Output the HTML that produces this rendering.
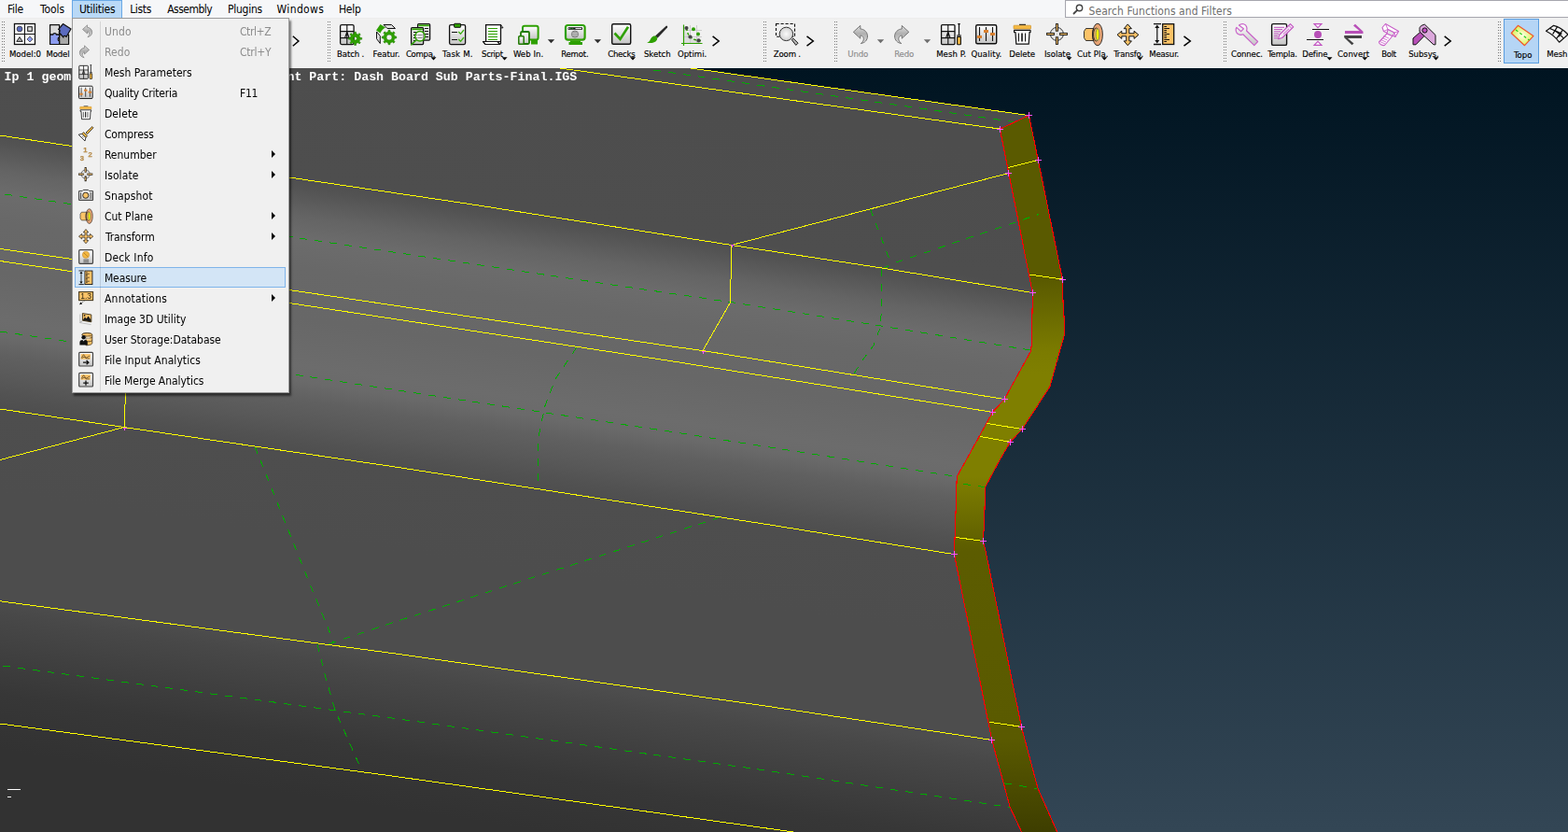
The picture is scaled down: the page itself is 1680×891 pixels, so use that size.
<!DOCTYPE html>
<html lang="en"><head><meta charset="utf-8"><title>ANSA - Utilities menu</title>
<style>
html,body{margin:0;padding:0}
body{width:1680px;height:891px;overflow:hidden;position:relative;background:#f0f0f0;font-family:"DejaVu Sans Condensed","DejaVu Sans","Liberation Sans",sans-serif;font-size:12px;color:#000}
#mb{position:absolute;left:0;top:0;width:1680px;height:19px;background:#f6f7f9;border-bottom:1px solid #ededed}
#mb span{position:absolute;top:1px;line-height:19px;white-space:nowrap}
#mb .msel{position:absolute;left:77px;top:0;width:52px;height:18px;background:#b9d9f7;border:1px solid #6aa9e6;border-bottom:none}
#search{position:absolute;left:1141px;top:0;width:560px;height:17px;background:#fff;border:1px solid #a6a6ae}
#search svg{position:absolute;left:6px;top:2px}
#search span{position:absolute;left:24.5px;top:2px;line-height:19px;color:#6e6e6e;letter-spacing:0.07px}
#tb{position:absolute;left:0;top:20px;width:1680px;height:53px;background:#f0f0f0}
.tl{position:absolute;top:32px;font-size:9.5px;line-height:12px;white-space:nowrap;-webkit-text-stroke:0.15px currentColor}
.tl.dis{color:#8d8d8d}
.topo{position:absolute;left:1611px;top:0;width:36px;height:46px;background:#b5d5f5;border:1px solid #5a9ee0}
#tbi{position:absolute;left:0;top:0}
#vp{position:absolute;left:0;top:73px;display:block;will-change:transform}
#dm{position:absolute;left:77px;top:19px;width:231px;height:400px;background:#f0f0f0;border:1px solid #9a9a9a;box-shadow:2px 2.5px 2px rgba(0,0,0,0.5)}
#dm .vsep{position:absolute;left:29px;top:3px;width:1px;height:396px;background:rgba(0,0,0,0.11);z-index:3}
.mi{position:absolute;left:2px;width:224px;height:20px;border:1px solid transparent;line-height:22px;white-space:nowrap}
.mi.hl{background:#d3e5f6;border-color:#7fb4ea}
.mi b{position:absolute;left:30px;top:0;font-weight:normal}
.mi u{position:absolute;left:176px;top:0;text-decoration:none}
.mi em{position:absolute;left:210px;top:6px;width:0;height:0;border-top:4px solid transparent;border-bottom:4px solid transparent;border-left:4px solid #000}
.mi.dis b,.mi.dis u{color:#8d8d8d}
#dmi{position:absolute;left:0;top:0;z-index:2}

</style></head>
<body>
<div id="mb">
<div class="msel"></div>
<span style="left:7.9px;letter-spacing:-0.22px">File</span>
<span style="left:42.9px;letter-spacing:-0.04px">Tools</span>
<span style="left:84.9px;letter-spacing:-0.24px">Utilities</span>
<span style="left:139.2px;letter-spacing:-0.35px">Lists</span>
<span style="left:179.2px;letter-spacing:-0.50px">Assembly</span>
<span style="left:243.9px;letter-spacing:-0.23px">Plugins</span>
<span style="left:296.6px;letter-spacing:0.35px">Windows</span>
<span style="left:362.9px;letter-spacing:-0.22px">Help</span>
<div id="search"><svg width="14" height="14" viewBox="0 0 14 14"><circle cx="8.5" cy="5.5" r="3.2" fill="none" stroke="#444" stroke-width="1.4"/><path d="M6.2 7.8L2.5 11.5" stroke="#444" stroke-width="1.8" stroke-linecap="round"/></svg><span>Search Functions and Filters</span></div>
</div>
<div id="tb">
<div class="topo"></div>
<svg id="tbi" width="1680" height="53" viewBox="0 20 1680 53">
<defs><linearGradient id="gw" x1="0" y1="0" x2="0" y2="1"><stop offset="0" stop-color="#fff"/><stop offset="1" stop-color="#c4c4c4"/></linearGradient><linearGradient id="gu" x1="0" y1="0" x2="0" y2="1"><stop offset="0" stop-color="#e2e2e2"/><stop offset="0.45" stop-color="#b0b0b0"/><stop offset="1" stop-color="#dedede"/></linearGradient><radialGradient id="gz" cx="0.5" cy="0.5" r="0.5"><stop offset="0" stop-color="#fafafa"/><stop offset="1" stop-color="#d2d2d2"/></radialGradient><radialGradient id="gt" cx="0.5" cy="0.5" r="0.6"><stop offset="0" stop-color="#ffffe8"/><stop offset="1" stop-color="#d4f03c"/></radialGradient></defs>
<g><rect x="15.5" y="25.5" width="22" height="22" fill="#fff" stroke="#111" stroke-width="1.3"/><path d="M26.5 25.5V47.5M15.5 36.5H37.5" stroke="#111" stroke-width="1.1"/><circle cx="21" cy="31" r="2.9" fill="#5b6bbf" stroke="#333" stroke-width="0.8"/><rect x="29.7" y="28.7" width="4.6" height="4.6" fill="#ddd" stroke="#111" stroke-width="1"/><path d="M21 39.6L17.8 44.4H24.2Z" fill="#aaa" stroke="#222" stroke-width="1"/><path d="M32 39L35 42L32 45L29 42Z" fill="#8c9cf0" stroke="#444" stroke-width="0.8"/></g>
<g stroke="#111" stroke-width="1.2" stroke-linejoin="round"><rect x="53.6" y="26.6" width="10" height="10.5" fill="#dadada"/><rect x="63.6" y="37" width="10" height="10.5" fill="#a8a8a8"/><path d="M53.6 47.5V37.2h3.2c0-2 3.6-2 3.6 0h3.2v3c-2 0-2 3.6 0 3.6v3.7Z" fill="#8c9cf0"/><path d="M67.5 25.6L76 31L71 39.5c-1-1.6-4-1.3-3 .6L63.2 34.5c1.6-.6 1.4-2.8-.6-3Z" fill="#5b6bbf"/></g>
<g><rect x="364.6" y="26.6" width="14.5" height="21" rx="1.5" fill="url(#gw)" stroke="#111" stroke-width="1.3"/><path d="M371.8 26.6V47.6M364.6 33.6H379M364.6 40.6H379M369.5 40.6L371.8 34L374 40.6" fill="none" stroke="#111" stroke-width="1.1"/><path d="M385.80 40.27 L387.74 40.40 L387.74 42.20 L385.80 42.33 L385.01 44.24 L386.29 45.71 L385.01 46.99 L383.54 45.71 L381.63 46.50 L381.50 48.44 L379.70 48.44 L379.57 46.50 L377.66 45.71 L376.19 46.99 L374.91 45.71 L376.19 44.24 L375.40 42.33 L373.46 42.20 L373.46 40.40 L375.40 40.27 L376.19 38.36 L374.91 36.89 L376.19 35.61 L377.66 36.89 L379.57 36.10 L379.70 34.16 L381.50 34.16 L381.63 36.10 L383.54 36.89 L385.01 35.61 L386.29 36.89 L385.01 38.36ZM382.40 41.30A1.8 1.8 0 1 0 378.80 41.30A1.8 1.8 0 1 0 382.40 41.30Z" fill="#2ea000" fill-rule="evenodd" stroke="#1f7a00" stroke-width="0.5"/></g>
<g><path d="M403 32.5L407.5 26L413 29.5C410 31 408.5 33 407.5 35.5Z" fill="#2ea000"/><path d="M411 26.5H419.5L423.5 30.5H415Z" fill="#ddd" stroke="#111" stroke-width="1"/><path d="M403.5 34L407.3 38.5V46.5L403.5 41.5Z" fill="#ddd" stroke="#111" stroke-width="1"/><path d="M422.88 38.83 L424.74 39.02 L424.74 40.98 L422.88 41.17 L421.99 43.33 L423.16 44.78 L421.78 46.16 L420.33 44.99 L418.17 45.88 L417.98 47.74 L416.02 47.74 L415.83 45.88 L413.67 44.99 L412.22 46.16 L410.84 44.78 L412.01 43.33 L411.12 41.17 L409.26 40.98 L409.26 39.02 L411.12 38.83 L412.01 36.67 L410.84 35.22 L412.22 33.84 L413.67 35.01 L415.83 34.12 L416.02 32.26 L417.98 32.26 L418.17 34.12 L420.33 35.01 L421.78 33.84 L423.16 35.22 L421.99 36.67ZM420.00 40.00A3 3 0 1 0 414.00 40.00A3 3 0 1 0 420.00 40.00Z" fill="#2ea000" fill-rule="evenodd" stroke="#1f7a00" stroke-width="0.5"/></g>
<g><rect x="447.6" y="25.6" width="13" height="17.5" rx="1" fill="url(#gw)" stroke="#111" stroke-width="1.3"/><rect x="448.3" y="26.4" width="11.6" height="1.8" fill="#2ea000"/><path d="M455 30.5H459M455 33.5H459M455 36.5H459M455 39.5H459" stroke="#111" stroke-width="1"/><rect x="440.6" y="29.6" width="13" height="18" rx="1" fill="url(#gw)" stroke="#111" stroke-width="1.3"/><rect x="441.3" y="30.4" width="11.6" height="1.8" fill="#2ea000"/><path d="M443 34.5H447M443 37.5H447M443 40.5H447M443 43.5H446" stroke="#111" stroke-width="1"/><circle cx="450" cy="38.8" r="5.3" fill="rgba(255,255,255,0.55)" stroke="#2ea000" stroke-width="1.5"/><path d="M446 43L440.6 47.8" stroke="#2ea000" stroke-width="1.6" stroke-linecap="round"/><path d="M447.5 37.5H452.5M447.5 40.5H452.5" stroke="#888" stroke-width="1"/></g>
<g><rect x="481.6" y="26.6" width="17" height="21" rx="1.5" fill="url(#gw)" stroke="#111" stroke-width="1.3"/><rect x="486.6" y="25.3" width="7" height="4" rx="0.6" fill="#2ea000" stroke="#111" stroke-width="1"/><path d="M484 34.5H490M484 42.5H490" stroke="#111" stroke-width="1.2"/><path d="M491.2 34L493.5 36.3L497 32M491.2 42L493.5 44.3L497 40" fill="none" stroke="#3cb010" stroke-width="1.3"/></g>
<g><path d="M520.6 44V26.6H536.5V44" fill="#fff" stroke="#111" stroke-width="1.3"/><path d="M536.5 26.6L539 29.8H536.5Z" fill="#fff" stroke="#111" stroke-width="1"/><path d="M517.5 44.5H533L535.5 47.5H520Z" fill="#fff" stroke="#111" stroke-width="1.2" stroke-linejoin="round"/><path d="M533 44.5H536.5V46.5L535.5 47.5" fill="none" stroke="#111" stroke-width="1.2"/><path d="M523 30.5H533M523 33.5H533M523 36.5H533M523 39.5H533M523 42.5H533" stroke="#2ea000" stroke-width="1.1"/></g>
<g><rect x="560" y="27.8" width="16.6" height="14.6" rx="2" fill="url(#gw)" stroke="#2ea000" stroke-width="2"/><rect x="569" y="43" width="7" height="4.5" fill="#2ea000"/><rect x="558" y="34" width="9" height="13" rx="1.2" fill="url(#gw)" stroke="#1f7a00" stroke-width="1.8"/><rect x="555.8" y="38.8" width="5.4" height="8.4" rx="0.8" fill="url(#gw)" stroke="#1f7a00" stroke-width="1.5"/></g>
<g><rect x="606" y="27" width="20.6" height="15.6" rx="2.5" fill="url(#gw)" stroke="#2ea000" stroke-width="2.2"/><path d="M611 43.5H622V45H624V48H609.5V45H611Z" fill="#2ea000"/><rect x="608.6" y="29.2" width="15.4" height="2.6" rx="0.5" fill="#111"/><path d="M616.5 30.5H623" stroke="#fff" stroke-width="0.9"/><circle cx="609.8" cy="30.5" r="0.6" fill="#fff"/><circle cx="611.8" cy="30.5" r="0.6" fill="#3c3"/><circle cx="613.8" cy="30.5" r="0.6" fill="#3c3"/><circle cx="616" cy="36.6" r="3.6" fill="#ccc" stroke="#777" stroke-width="0.9"/><path d="M612.5 36.6H619.5M613.5 34.6H618.5M613.5 38.6H618.5" stroke="#777" stroke-width="0.7"/></g>
<g><rect x="655.7" y="25.7" width="20" height="21.6" rx="1.5" fill="url(#gw)" stroke="#111" stroke-width="1.4"/><path d="M658.5 35.5L664.5 42L673 28.8" fill="none" stroke="#2ea000" stroke-width="2.6"/></g>
<g><path d="M714 27.6C715 27.8 715.5 28.6 715 29.5L704.5 40.8L702 38.5Z" fill="#2a2a2a"/><path d="M702.3 38.6C699 38 697.5 41 696.5 43C695.5 44.8 694 45.5 693 45.8C697 46.6 702.5 46 704 42.5C704.5 41.3 704 39.6 702.3 38.6Z" fill="#2ea000"/></g>
<g><path d="M733 27H751V46H733Z" fill="none"/><path d="M733 46L733 30C735 38 741 43 751 44.5V46Z" fill="#dcdcdc"/><path d="M739.5 27V46M746.5 27V46M733 32.5H752M733 39.5H752" stroke="#c8c8c8" stroke-width="0.9"/><path d="M732.5 26.5V49M730 46.5H752.5" stroke="#2ea000" stroke-width="1.2"/><path d="M735.5 30C736.5 36 738.5 39 740 40C743 42.5 746 43 752 43.6" fill="none" stroke="#2ea000" stroke-width="1.5" stroke-dasharray="3 2"/><circle cx="743" cy="31.3" r="2" fill="#2ea000"/><circle cx="748" cy="36.5" r="2" fill="#2ea000"/><circle cx="735.5" cy="30" r="2.1" fill="#444"/><circle cx="739.5" cy="39.5" r="2.1" fill="#444"/><circle cx="748.5" cy="43.4" r="2.1" fill="#444"/></g>
<g><rect x="831.5" y="25.5" width="20" height="13.8" fill="none" stroke="#111" stroke-width="1.1" stroke-dasharray="3.2 1.8"/><circle cx="842.4" cy="36.4" r="7.2" fill="url(#gz)" stroke="#333" stroke-width="1"/><path d="M848.3 42.6L850 41.2L855 46.2L852.8 48.4Z" fill="#bbb" stroke="#111" stroke-width="1"/></g>
<path d="M914.3 34.3L921.8 27.4V31C926 31.2 929.6 34.5 929.5 39C929.4 43 926.5 46 922.3 46.6C925.3 44.5 926 41.5 924.7 39.6C923.8 38.3 922.8 38 921.8 38V41.2Z" fill="url(#gu)" stroke="#6a6a6a" stroke-width="0.9" stroke-linejoin="round"/>
<g transform="translate(1888.1 0) scale(-1 1)"><path d="M914.3 34.3L921.8 27.4V31C926 31.2 929.6 34.5 929.5 39C929.4 43 926.5 46 922.3 46.6C925.3 44.5 926 41.5 924.7 39.6C923.8 38.3 922.8 38 921.8 38V41.2Z" fill="url(#gu)" stroke="#6a6a6a" stroke-width="0.9" stroke-linejoin="round"/></g>
<g><rect x="1008.6" y="26.6" width="14.4" height="21" rx="1" fill="url(#gw)" stroke="#111" stroke-width="1.3"/><path d="M1015.8 26.6V47.6M1008.6 33.6H1023M1008.6 40.6H1023M1013.6 40.6L1015.8 34L1018 40.6" fill="none" stroke="#111" stroke-width="1.1"/><path d="M1027.5 25.5V38" stroke="#111" stroke-width="1.2"/><path d="M1026.3 25.6H1028.7M1025 38H1030" stroke="#111" stroke-width="1.2"/><rect x="1025.6" y="39.4" width="3.8" height="8.4" rx="0.8" fill="#f5b942" stroke="#111" stroke-width="1.1"/></g>
<g><rect x="1045.7" y="26.7" width="22" height="20" rx="1.5" fill="url(#gw)" stroke="#111" stroke-width="1.4"/><path d="M1049.5 29V44M1056.5 29V44M1063.5 29V44" stroke="#111" stroke-width="1.1"/><rect x="1047" y="38" width="5" height="3" fill="#d88030"/><rect x="1054" y="32" width="5" height="3" fill="#d88030"/><rect x="1061" y="35" width="5" height="3" fill="#d88030"/></g>
<g><path d="M1092 26.4H1099" stroke="#222" stroke-width="1.2"/><rect x="1086" y="27.2" width="18.5" height="3.8" rx="0.6" fill="#f5b942" stroke="#c98a20" stroke-width="0.6"/><path d="M1086.6 32.4H1104V34.6H1103L1102.2 47.2H1088.8L1088 34.6H1086.6Z" fill="#fff" stroke="#111" stroke-width="1.2" stroke-linejoin="round"/><path d="M1091.5 35.5V44.5M1098.5 35.5V44.5" stroke="#111" stroke-width="1"/><path d="M1095 35.5V44.5" stroke="#111" stroke-width="1.6"/></g>
<g><circle cx="1132.4" cy="36.4" r="7" fill="#e4e4e4" stroke="#222" stroke-width="0.9"/><g fill="#fbc368" stroke="#111" stroke-width="0.9"><rect x="1121.6" y="35.4" width="7.8" height="2.1"/><rect x="1135.6" y="35.4" width="7.8" height="2.1"/><rect x="1131.4" y="25.6" width="2.1" height="7.6"/><rect x="1131.4" y="39.8" width="2.1" height="7.6"/></g></g>
<g stroke="#222" stroke-width="0.9"><path d="M1163.5 30.5H1172V43.5H1163.5L1161.5 40.5V33.5Z" fill="#fbc368"/><ellipse cx="1176" cy="37" rx="5.4" ry="11.8" fill="#e8a474"/><path d="M1172 30.5C1170 33 1170 41 1172 43.5" fill="none"/><ellipse cx="1174.6" cy="37" rx="3" ry="7" fill="#f4b860"/><ellipse cx="1176" cy="37" rx="1.9" ry="6.4" fill="#f2f200" stroke="#886"/></g>
<path d="M1208.3 25.9L1212.3999999999999 30.7H1209.8V35.8H1215.1000000000001V33.199999999999996L1219.9 37.3L1215.1000000000001 41.4V38.8H1209.8V43.900000000000006H1212.3999999999999L1208.3 48.7L1204.2 43.900000000000006H1206.8V38.8H1201.8V41.4L1197.0 37.3L1201.8 33.199999999999996V35.8H1206.8V30.7H1204.2Z" fill="#fbc368" stroke="#111" stroke-width="1" stroke-linejoin="miter"/>
<g><path d="M1236 25.6H1244M1236 47.5H1244" stroke="#111" stroke-width="1.3"/><path d="M1239.8 28V45" stroke="#111" stroke-width="1.2"/><path d="M1239.8 26.6L1242.3 30H1237.3ZM1239.8 46.5L1242.3 43H1237.3Z" fill="#111"/><rect x="1245.7" y="25.7" width="12" height="21.8" fill="#fbc368" stroke="#111" stroke-width="1.3"/><path d="M1247.3 28.5H1250M1247.3 30.5H1253M1247.3 32.5H1250M1247.3 34.5H1250M1247.3 36.5H1253M1247.3 38.5H1250M1247.3 40.5H1250M1247.3 42.5H1253M1247.3 44.5H1250" stroke="#111" stroke-width="1"/></g>
<path d="M1327.5 27C1330.5 24.6 1334.8 25.4 1335.8 29.2C1336.2 30.8 1336 32 1335.6 33L1347.6 44.5L1343.8 48.6L1331.8 36.8C1328.6 38.2 1324.8 36.6 1324.2 33C1324 31.6 1324.3 30.3 1324.9 29.4L1329.6 33.6L1332.4 30.8Z" fill="url(#gw)" stroke="#c860c8" stroke-width="1.2" stroke-linejoin="round"/>
<g><rect x="1362.6" y="25.6" width="16" height="22.8" rx="1.5" fill="url(#gw)" stroke="#111" stroke-width="1.4"/><path d="M1365 29.3H1376M1365 31.6H1374M1365 33.9H1372M1365 36.2H1370M1365 38.5H1369M1365 40.8H1369" stroke="#c050c0" stroke-width="1"/><path d="M1382.5 25.6L1385.8 28.8L1373.8 40.5L1369.6 41.8L1370.6 37.5Z" fill="#f4e4f4" stroke="#c050c0" stroke-width="1.1" stroke-linejoin="round"/><path d="M1380.8 27.3L1384 30.5M1375 36.5L1381 30.8" stroke="#c050c0" stroke-width="0.9"/></g>
<g><circle cx="1412" cy="37" r="4" fill="#b84fb8"/><path d="M1406 31.5H1424M1400 42.5H1418" stroke="#111" stroke-width="1.2"/><path d="M1408 25.6H1416L1412 29.6ZM1408 48.4H1416L1412 44.4Z" fill="#fff" stroke="#c050c0" stroke-width="1.1"/></g>
<g><path d="M1441 33H1456.5L1450 27.5L1452 25.8L1460.5 33.8V36H1441Z" fill="#b84fb8"/><path d="M1459 41H1444L1450.5 46.5L1448.5 48.2L1440.2 40.2V38H1459Z" fill="#444"/></g>
<g fill="#fff" stroke="#c860c8" stroke-width="1.1" stroke-linejoin="round"><path d="M1486 36L1492 38.5L1483.5 48.5C1481 49 1477.5 47 1477.5 45Z"/><path d="M1479.5 42.5L1485 45M1481 40.5L1486.5 43M1482.5 38.5L1488 41M1478.5 44.5L1484 47" fill="none" stroke-width="0.8"/><path d="M1484.5 25.5L1498.5 33.5L1495 39.5L1482.5 33.5L1481 29.5Z"/><path d="M1484.5 25.5L1487 31.5L1482.5 33.5M1487 31.5L1494 35L1495 39.5M1494 35L1498.5 33.5" fill="none" stroke-width="0.9"/><path d="M1487 31.5L1494 35L1492 38.5L1486 36Z" fill="#e4e4e4"/></g>
<g stroke="#111" stroke-width="1" stroke-linejoin="round"><path d="M1514 41L1521.5 34.5L1526 38.5L1517 47.8H1514Z" fill="#b84fb8"/><path d="M1521 31.5C1520.5 29 1522.5 27 1526.5 26.2L1538 37.5V47.8H1536L1521 34Z" fill="#dca8dc"/><circle cx="1526.5" cy="32.5" r="2.6" fill="#c050c0"/></g>
<g><path d="M1626.4 27.3L1642.9 38.6L1633.5 48.7L1619.3 35.5Z" fill="url(#gt)" stroke="#f0562c" stroke-width="1.2" stroke-linejoin="round"/><path d="M1624 32L1638.5 43" stroke="#20d020" stroke-width="1.2" stroke-dasharray="3 2.5"/></g>
<g fill="none" stroke="#111" stroke-width="1.2" stroke-linejoin="round"><path d="M1656.5 33.2L1664.6 27.3C1670 28.6 1675.5 32 1680 37L1670.6 45.2C1667 40 1662 36 1656.5 33.2Z" fill="#f4f4f4"/><path d="M1660.4 30.4C1666 32.4 1671.2 36 1675.2 41M1668.6 28.6L1663.6 36.6M1674.4 32.2L1667.6 41.4M1666.2 32.8L1673 36L1670.2 39.2"/></g>
<path d="M2.5 23V66M4.5 23V66" stroke="#787878" stroke-width="1" stroke-dasharray="1 2" shape-rendering="crispEdges"/>
<path d="M351.5 23V66M353.5 23V66" stroke="#787878" stroke-width="1" stroke-dasharray="1 2" shape-rendering="crispEdges"/>
<path d="M818.5 23V66M820.5 23V66" stroke="#787878" stroke-width="1" stroke-dasharray="1 2" shape-rendering="crispEdges"/>
<path d="M894.5 23V66M896.5 23V66" stroke="#787878" stroke-width="1" stroke-dasharray="1 2" shape-rendering="crispEdges"/>
<path d="M1311.5 23V66M1313.5 23V66" stroke="#787878" stroke-width="1" stroke-dasharray="1 2" shape-rendering="crispEdges"/>
<path d="M1605.5 23V66M1607.5 23V66" stroke="#787878" stroke-width="1" stroke-dasharray="1 2" shape-rendering="crispEdges"/>
<path d="M313.8 38.8L319.9 44L313.8 49.2" fill="none" stroke="#000" stroke-width="1.5"/>
<path d="M763.6 38.8L770.2 44L763.6 49.2" fill="none" stroke="#000" stroke-width="1.5"/>
<path d="M864.5 38.8L871.3 44L864.5 49.2" fill="none" stroke="#000" stroke-width="1.5"/>
<path d="M1268.5 38.8L1275.3 44L1268.5 49.2" fill="none" stroke="#000" stroke-width="1.5"/>
<path d="M1547.7 38.8L1554.2 44L1547.7 49.2" fill="none" stroke="#000" stroke-width="1.5"/>
<path d="M586.8 42.2H594.2L590.5 46.2Z" fill="#2e2e2e"/>
<path d="M636.7 42.2H644.1L640.4 46.2Z" fill="#2e2e2e"/>
<path d="M939.8 42.2H947.2L943.5 46.2Z" fill="#6e6e6e"/>
<path d="M989.8 42.2H997.2L993.5 46.2Z" fill="#6e6e6e"/>
<path d="M461.5 61.2H467.5L464.5 64.4Z" fill="#000"/>
<path d="M537.6 61.2H543.6L540.6 64.4Z" fill="#000"/>
<path d="M675.0 61.2H681.0L678.0 64.4Z" fill="#000"/>
<path d="M1142.5 61.2H1148.5L1145.5 64.4Z" fill="#000"/>
<path d="M1180.3 61.2H1186.3L1183.3 64.4Z" fill="#000"/>
<path d="M1218.4 61.2H1224.4L1221.4 64.4Z" fill="#000"/>
<path d="M1421.5 61.2H1427.5L1424.5 64.4Z" fill="#000"/>
<path d="M1459.3 61.2H1465.3L1462.3 64.4Z" fill="#000"/>
<path d="M1535.5 61.2H1541.5L1538.5 64.4Z" fill="#000"/>
</svg>
<div class="tl" style="left:9.9px;letter-spacing:0.02px">Model:0</div>
<div class="tl" style="left:49.4px;letter-spacing:-0.10px">Model</div>
<div class="tl" style="left:361.1px;letter-spacing:-0.13px">Batch .</div>
<div class="tl" style="left:399.6px;letter-spacing:-0.03px">Featur.</div>
<div class="tl" style="left:434.9px;letter-spacing:-0.28px">Compa.</div>
<div class="tl" style="left:474.1px;letter-spacing:0.23px">Task M.</div>
<div class="tl" style="left:516.1px;letter-spacing:-0.38px">Script</div>
<div class="tl" style="left:549.9px;letter-spacing:0.07px">Web In.</div>
<div class="tl" style="left:601.2px;letter-spacing:-0.18px">Remot.</div>
<div class="tl" style="left:651.2px;letter-spacing:-0.24px">Checks</div>
<div class="tl" style="left:689.9px;letter-spacing:0.02px">Sketch</div>
<div class="tl" style="left:725.9px;letter-spacing:0.02px">Optimi.</div>
<div class="tl" style="left:828.8px;letter-spacing:-0.16px">Zoom .</div>
<div class="tl dis" style="left:908.2px;letter-spacing:-0.07px">Undo</div>
<div class="tl dis" style="left:958.2px;letter-spacing:-0.10px">Redo</div>
<div class="tl" style="left:1003.2px;letter-spacing:0.05px">Mesh P.</div>
<div class="tl" style="left:1040.4px;letter-spacing:0.13px">Quality.</div>
<div class="tl" style="left:1081.2px;letter-spacing:-0.03px">Delete</div>
<div class="tl" style="left:1118.9px;letter-spacing:-0.07px">Isolate</div>
<div class="tl" style="left:1154.1px;letter-spacing:0.06px">Cut Pla.</div>
<div class="tl" style="left:1193.2px;letter-spacing:-0.17px">Transfo.</div>
<div class="tl" style="left:1231.2px;letter-spacing:-0.16px">Measur.</div>
<div class="tl" style="left:1319.1px;letter-spacing:-0.13px">Connec.</div>
<div class="tl" style="left:1358.2px;letter-spacing:-0.20px">Templa.</div>
<div class="tl" style="left:1395.3px;letter-spacing:-0.16px">Define</div>
<div class="tl" style="left:1433.1px;letter-spacing:0.05px">Convert</div>
<div class="tl" style="left:1480.3px;letter-spacing:-0.37px">Bolt</div>
<div class="tl" style="left:1509.2px;letter-spacing:-0.07px">Subsys.</div>
<div class="tl" style="left:1621.9px;letter-spacing:0.00px;top:33px">Topo</div>
<div class="tl" style="left:1657.3px;letter-spacing:-0.10px">Mesh</div>
</div>
<svg id="vp" width="1680" height="818" viewBox="0 73 1680 818">
<defs>
<linearGradient id="bg" gradientUnits="userSpaceOnUse" x1="0" y1="73" x2="0" y2="891"><stop offset="0" stop-color="#001421"/><stop offset="1" stop-color="#334655"/></linearGradient>
<linearGradient id="sf" gradientUnits="userSpaceOnUse" x1="0" y1="0" x2="-146.70" y2="978.00"><stop offset="0.0000" stop-color="#4d4d4d"/><stop offset="0.1400" stop-color="#4e4e4e"/><stop offset="0.1530" stop-color="#535353"/><stop offset="0.1830" stop-color="#646464"/><stop offset="0.2070" stop-color="#6c6c6c"/><stop offset="0.2380" stop-color="#686868"/><stop offset="0.2930" stop-color="#676767"/><stop offset="0.3230" stop-color="#6a6a6a"/><stop offset="0.3430" stop-color="#6c6c6c"/><stop offset="0.3600" stop-color="#6a6a6a"/><stop offset="0.3800" stop-color="#606060"/><stop offset="0.4030" stop-color="#595959"/><stop offset="0.4230" stop-color="#525252"/><stop offset="0.4380" stop-color="#4e4e4e"/><stop offset="0.5280" stop-color="#4d4d4d"/><stop offset="0.6400" stop-color="#4d4d4d"/><stop offset="0.6580" stop-color="#484848"/><stop offset="0.6980" stop-color="#404040"/><stop offset="0.7430" stop-color="#373737"/><stop offset="0.8030" stop-color="#323232"/><stop offset="1.0000" stop-color="#323232"/></linearGradient>
<linearGradient id="bd" gradientUnits="userSpaceOnUse" x1="0" y1="0" x2="0" y2="891"><stop offset="0.1392" stop-color="#5a5a00"/><stop offset="0.3367" stop-color="#5a5a00"/><stop offset="0.4220" stop-color="#7b7b00"/><stop offset="0.4489" stop-color="#7f7f00"/><stop offset="0.5724" stop-color="#7f7f00"/><stop offset="0.6622" stop-color="#5c5c00"/><stop offset="0.8866" stop-color="#5a5a00"/><stop offset="1.0000" stop-color="#3e3e00"/></linearGradient>
</defs>
<rect x="0" y="73" width="1680" height="818" fill="url(#bg)"/>
<polygon points="0.0,73.0 740.0,73.0 1102.4,123.6 1071.4,138.1 1106.3,313.5 1105.5,368.6 1104.3,376.3 1076.2,427.5 1063.5,441.4 1036.7,490.0 1025.2,510.5 1023.8,555.5 1022.4,593.6 1062.7,792.4 1082.1,864.2 1094.6,891.0 0.0,891.0" fill="url(#sf)"/>
<polygon points="1102.4,123.6 1112.3,171.4 1138.3,299.0 1139.0,323.0 1140.5,347.0 1140.5,358.5 1131.5,390.0 1125.0,413.8 1095.2,459.6 1082.4,473.3 1072.6,490.0 1055.7,521.5 1054.5,561.4 1053.3,579.5 1056.0,590.0 1094.4,778.3 1111.9,844.0 1132.7,891.0 1094.6,891.0 1082.1,864.2 1062.7,792.4 1022.4,593.6 1023.8,555.5 1025.2,510.5 1036.7,490.0 1063.5,441.4 1076.2,427.5 1104.3,376.3 1105.5,368.6 1106.3,313.5 1071.4,138.1" fill="url(#bd)"/>
<g fill="none" stroke="#00aa00" stroke-width="1" stroke-dasharray="8 8" shape-rendering="crispEdges">
<polyline points="700.0,75.0 1090.0,131.0"/>
<polyline points="5.0,208.0 700.0,311.5 782.5,323.5 943.8,349.0 1104.0,375.0"/>
<polyline points="0.0,355.0 314.0,401.0 720.0,462.5 1025.2,510.5"/>
<polyline points="3.0,713.0 420.0,769.0 820.0,825.0 1082.0,864.5"/>
<polyline points="932.5,223.8 953.8,280.0"/>
<polyline points="945.0,288.0 960.0,281.0 1113.0,229.5"/>
<polyline points="945.0,288.0 943.8,348.8 936.0,370.0 924.0,386.0 915.0,400.0"/>
<polyline points="617.5,372.5 595.0,406.0 583.8,435.0 576.0,472.5 577.0,521.0"/>
<polyline points="273.0,478.0 331.0,623.0 352.5,675.0 357.5,689.0"/>
<polyline points="340.0,690.0 348.8,725.0 358.8,760.0 387.5,825.0"/>
<polyline points="352.5,689.5 420.0,667.0 770.0,554.5"/>
<polyline points="1131.5,383.5 1134.5,386.5"/>
<polyline points="1032.0,518.3 1055.0,521.5"/>
<polyline points="1076.0,838.8 1111.5,844.5"/>
</g>
<g fill="none" stroke="#ffff00" stroke-width="1" shape-rendering="crispEdges">
<polyline points="740.0,73.0 1102.4,123.6"/>
<polyline points="600.0,73.0 1071.4,138.1"/>
<polyline points="0.0,145.0 77.0,156.5 310.0,190.0 500.0,218.0 783.8,262.5 945.0,287.0 1106.3,313.5"/>
<polyline points="783.8,262.5 932.5,223.8 1080.7,185.5"/>
<polyline points="783.8,262.5 782.5,323.8 753.0,375.5"/>
<polyline points="0.0,266.5 310.0,310.5 720.0,371.0 753.0,375.5 1076.2,427.5"/>
<polyline points="0.0,279.5 310.0,324.5 720.0,386.8 1063.5,441.4"/>
<polyline points="0.0,438.0 133.0,457.5 420.0,499.5 819.5,561.2 1022.4,593.6"/>
<polyline points="0.0,492.5 133.0,457.5"/>
<polyline points="134.5,421.0 133.0,457.5"/>
<polyline points="0.0,643.8 420.0,699.5 820.0,756.0 1062.7,792.4"/>
<polyline points="0.0,775.0 420.0,831.0 820.0,886.8 850.0,891.0"/>
<polyline points="1080.0,179.5 1112.3,171.4"/>
<polyline points="1103.3,294.0 1138.3,299.0"/>
<polyline points="1057.0,453.3 1095.2,459.6"/>
<polyline points="1050.0,467.4 1082.4,473.3"/>
<polyline points="1024.0,575.4 1053.3,579.5"/>
<polyline points="1059.9,773.3 1094.4,778.3"/>
</g>
<g fill="none" stroke="#ff0000" stroke-width="1.1" shape-rendering="crispEdges">
<polyline points="1071.4,138.1 1106.3,313.5 1105.5,368.6 1104.3,376.3 1076.2,427.5 1063.5,441.4 1036.7,490.0 1025.2,510.5 1023.8,555.5 1022.4,593.6 1062.7,792.4 1082.1,864.2 1094.6,891.0"/>
<polyline points="1102.4,123.6 1112.3,171.4 1138.3,299.0 1139.0,323.0 1140.5,347.0 1140.5,358.5 1131.5,390.0 1125.0,413.8 1095.2,459.6 1082.4,473.3 1072.6,490.0 1055.7,521.5 1054.5,561.4 1053.3,579.5 1056.0,590.0 1094.4,778.3 1111.9,844.0 1132.7,891.0"/>
<polyline points="1071.4,138.1 1102.4,123.6"/>
</g>
<g stroke="#ff50ff" stroke-width="1" shape-rendering="crispEdges">
<path d="M1099.0 123.5H1106.0M1102.5 120.0V127.0"/>
<path d="M1068.0 138.5H1075.0M1071.5 135.0V142.0"/>
<path d="M1109.0 171.5H1116.0M1112.5 168.0V175.0"/>
<path d="M1077.0 185.5H1084.0M1080.5 182.0V189.0"/>
<path d="M1135.0 299.5H1142.0M1138.5 296.0V303.0"/>
<path d="M1103.0 313.5H1110.0M1106.5 310.0V317.0"/>
<path d="M1073.0 427.5H1080.0M1076.5 424.0V431.0"/>
<path d="M1060.0 441.5H1067.0M1063.5 438.0V445.0"/>
<path d="M1092.0 459.5H1099.0M1095.5 456.0V463.0"/>
<path d="M1079.0 473.5H1086.0M1082.5 470.0V477.0"/>
<path d="M1050.0 579.5H1057.0M1053.5 576.0V583.0"/>
<path d="M1019.0 593.5H1026.0M1022.5 590.0V597.0"/>
<path d="M1091.0 778.5H1098.0M1094.5 775.0V782.0"/>
<path d="M1059.0 792.5H1066.0M1062.5 789.0V796.0"/>
<path d="M782.5 262.5H786.5M784.5 261.5V264.5"/>
<path d="M751.5 376.5H755.5M753.5 375.5V378.5"/>
<path d="M131.5 458.5H135.5M133.5 457.5V460.5"/>
</g>
<path d="M8 845.5H22M8 853.5H12" stroke="#fff" stroke-width="1" shape-rendering="crispEdges"/>
<text x="4.6" y="86" fill="#fff" font-family="'Liberation Mono',monospace" font-weight="bold" font-size="13.29px" xml:space="preserve" style="white-space:pre">Ip 1 geometry                    Current Part: Dash Board Sub Parts-Final.IGS</text>
</svg>
<div id="dm">
<div class="vsep"></div>
<svg id="dmi" width="30" height="400" viewBox="78 20 30 400"><g transform="translate(84.00 24.60) scale(0.6667) translate(-907.50 -24)"><path d="M914.3 34.3L921.8 27.4V31C926 31.2 929.6 34.5 929.5 39C929.4 43 926.5 46 922.3 46.6C925.3 44.5 926 41.5 924.7 39.6C923.8 38.3 922.8 38 921.8 38V41.2Z" fill="url(#gu)" stroke="#6a6a6a" stroke-width="0.9" stroke-linejoin="round"/></g>
<g transform="translate(84.00 46.60) scale(0.6667) translate(-956.50 -24)"><g transform="translate(1888.1 0) scale(-1 1)"><path d="M914.3 34.3L921.8 27.4V31C926 31.2 929.6 34.5 929.5 39C929.4 43 926.5 46 922.3 46.6C925.3 44.5 926 41.5 924.7 39.6C923.8 38.3 922.8 38 921.8 38V41.2Z" fill="url(#gu)" stroke="#6a6a6a" stroke-width="0.9" stroke-linejoin="round"/></g></g>
<g transform="translate(83.70 68.60) scale(0.6667) translate(-1007.00 -24)"><g><rect x="1008.6" y="26.6" width="14.4" height="21" rx="1" fill="url(#gw)" stroke="#111" stroke-width="1.3"/><path d="M1015.8 26.6V47.6M1008.6 33.6H1023M1008.6 40.6H1023M1013.6 40.6L1015.8 34L1018 40.6" fill="none" stroke="#111" stroke-width="1.1"/><path d="M1027.5 25.5V38" stroke="#111" stroke-width="1.2"/><path d="M1026.3 25.6H1028.7M1025 38H1030" stroke="#111" stroke-width="1.2"/><rect x="1025.6" y="39.4" width="3.8" height="8.4" rx="0.8" fill="#f5b942" stroke="#111" stroke-width="1.1"/></g></g>
<g transform="translate(83.70 90.40) scale(0.6667) translate(-1044.50 -24)"><g><rect x="1045.7" y="26.7" width="22" height="20" rx="1.5" fill="url(#gw)" stroke="#111" stroke-width="1.4"/><path d="M1049.5 29V44M1056.5 29V44M1063.5 29V44" stroke="#111" stroke-width="1.1"/><rect x="1047" y="38" width="5" height="3" fill="#d88030"/><rect x="1054" y="32" width="5" height="3" fill="#d88030"/><rect x="1061" y="35" width="5" height="3" fill="#d88030"/></g></g>
<g transform="translate(84.00 112.20) scale(0.6667) translate(-1083.50 -24)"><g><path d="M1092 26.4H1099" stroke="#222" stroke-width="1.2"/><rect x="1086" y="27.2" width="18.5" height="3.8" rx="0.6" fill="#f5b942" stroke="#c98a20" stroke-width="0.6"/><path d="M1086.6 32.4H1104V34.6H1103L1102.2 47.2H1088.8L1088 34.6H1086.6Z" fill="#fff" stroke="#111" stroke-width="1.2" stroke-linejoin="round"/><path d="M1091.5 35.5V44.5M1098.5 35.5V44.5" stroke="#111" stroke-width="1"/><path d="M1095 35.5V44.5" stroke="#111" stroke-width="1.6"/></g></g>
<g transform="translate(84 135)"><path d="M14.8 0.6L16 1.8L9.6 8.6L8 7Z" fill="#f5b942" stroke="#222" stroke-width="0.8"/><path d="M5.6 6.6L9.6 10.6L7.8 12.4L3.8 8.4Z" fill="#f5b942" stroke="#222" stroke-width="0.8"/><path d="M3.8 8.4L7.8 12.4L7 16L0.2 9.2Z" fill="#fff" stroke="#222" stroke-width="0.9" stroke-linejoin="round"/><path d="M3.6 10.6L5.6 12.6" stroke="#555" stroke-width="0.7"/></g>
<g transform="translate(84 157)" font-family="'Liberation Sans',sans-serif" font-weight="bold" font-size="7.6px" fill="#c89850" stroke="#9a7840" stroke-width="0.25"><text x="5.2" y="6.4">1</text><text x="10.6" y="11.2">2</text><text x="1.8" y="15.2">3</text></g>
<g transform="translate(83.70 178.30) scale(0.6667) translate(-1120.50 -24)"><g><circle cx="1132.4" cy="36.4" r="7" fill="#e4e4e4" stroke="#222" stroke-width="0.9"/><g fill="#fbc368" stroke="#111" stroke-width="0.9"><rect x="1121.6" y="35.4" width="7.8" height="2.1"/><rect x="1135.6" y="35.4" width="7.8" height="2.1"/><rect x="1131.4" y="25.6" width="2.1" height="7.6"/><rect x="1131.4" y="39.8" width="2.1" height="7.6"/></g></g></g>
<g transform="translate(84 201)"><path d="M0.6 3.6H4.2L5.2 2.4H10.6L11.6 3.6H15.6V13.4H0.6Z" fill="url(#gw)" stroke="#3a3a3a" stroke-width="1" stroke-linejoin="round"/><rect x="12" y="5" width="2.8" height="7" fill="#999"/><path d="M2.6 5.2V12" stroke="#333" stroke-width="0.9"/><circle cx="7.8" cy="8.2" r="3.1" fill="#fbc368" stroke="#222" stroke-width="0.9"/></g>
<g transform="translate(84.00 222.90) scale(0.6667) translate(-1158.50 -24)"><g stroke="#222" stroke-width="0.9"><path d="M1163.5 30.5H1172V43.5H1163.5L1161.5 40.5V33.5Z" fill="#fbc368"/><ellipse cx="1176" cy="37" rx="5.4" ry="11.8" fill="#e8a474"/><path d="M1172 30.5C1170 33 1170 41 1172 43.5" fill="none"/><ellipse cx="1174.6" cy="37" rx="3" ry="7" fill="#f4b860"/><ellipse cx="1176" cy="37" rx="1.9" ry="6.4" fill="#f2f200" stroke="#886"/></g></g>
<g transform="translate(84.00 244.30) scale(0.6667) translate(-1196.30 -24)"><path d="M1208.3 25.9L1212.3999999999999 30.7H1209.8V35.8H1215.1000000000001V33.199999999999996L1219.9 37.3L1215.1000000000001 41.4V38.8H1209.8V43.900000000000006H1212.3999999999999L1208.3 48.7L1204.2 43.900000000000006H1206.8V38.8H1201.8V41.4L1197.0 37.3L1201.8 33.199999999999996V35.8H1206.8V30.7H1204.2Z" fill="#fbc368" stroke="#111" stroke-width="1" stroke-linejoin="miter"/></g>
<g transform="translate(84 267)"><rect x="0.7" y="0.7" width="14.8" height="14.6" rx="1" fill="url(#gw)" stroke="#444" stroke-width="1.2"/><rect x="5.4" y="10.4" width="5.8" height="4.6" fill="#8c8c8c"/><circle cx="8" cy="5.8" r="3.6" fill="#f5b942" stroke="#c8923a" stroke-width="0.7"/><path d="M5.6 3.6L10.4 8" stroke="#b07a28" stroke-width="0.9"/></g>
<g transform="translate(83.80 288.90) scale(0.6667) translate(-1235.00 -24)"><g><path d="M1236 25.6H1244M1236 47.5H1244" stroke="#111" stroke-width="1.3"/><path d="M1239.8 28V45" stroke="#111" stroke-width="1.2"/><path d="M1239.8 26.6L1242.3 30H1237.3ZM1239.8 46.5L1242.3 43H1237.3Z" fill="#111"/><rect x="1245.7" y="25.7" width="12" height="21.8" fill="#fbc368" stroke="#111" stroke-width="1.3"/><path d="M1247.3 28.5H1250M1247.3 30.5H1253M1247.3 32.5H1250M1247.3 34.5H1250M1247.3 36.5H1253M1247.3 38.5H1250M1247.3 40.5H1250M1247.3 42.5H1253M1247.3 44.5H1250" stroke="#111" stroke-width="1"/></g></g>
<g transform="translate(84 311)"><rect x="0.6" y="1.6" width="15" height="9" fill="#fbc368" stroke="#4a3c20" stroke-width="1.1"/><text x="8.1" y="9.3" text-anchor="middle" font-family="'Liberation Sans',sans-serif" font-size="8.5px" fill="#2a2210">1.3</text><path d="M6.6 11.2L3 13.6" stroke="#444" stroke-width="0.7" stroke-dasharray="1.2 0.8"/><path d="M1 15.2L2.6 12.4L4.2 14.6Z" fill="#000"/></g>
<g transform="translate(84 333)"><path d="M1.8 3.5V12.6L13.6 14.6" fill="none" stroke="#bbb" stroke-width="0.9"/><path d="M1.6 12.4L4.4 10.6" stroke="#999" stroke-width="0.8"/><path d="M4.4 2.6L13.8 4V11.8L4.4 10.2Z" fill="#fbc368" stroke="#4a3c20" stroke-width="1"/><path d="M4.8 9.8L7 6.6L8.6 8.2L10.6 5.6L13.4 9.6V11.4L4.8 10Z" fill="#1a1a1a"/><circle cx="6.6" cy="4.8" r="0.9" fill="#1a1a1a"/></g>
<g transform="translate(84 355)"><g fill="#fbc368" stroke="#3a3020" stroke-width="0.8"><path d="M3.8 3.6C3.8 1.2 14.8 1.2 14.8 3.6V12.4C14.8 14.8 8 14.8 8 14.8V3.6Z"/><ellipse cx="9.3" cy="3.4" rx="5.5" ry="1.7"/><path d="M8 7C11 7.6 14 7 14.8 6M8 10.6C11 11.2 14 10.6 14.8 9.6" fill="none"/></g><path d="M7 6.2H12.4M7 8H12.4" stroke="#eee" stroke-width="0.9"/><circle cx="5.6" cy="6.2" r="2.2" fill="#111"/><path d="M1.4 14.6V11.6C1.4 9.8 3 9 4.4 9L5.6 10.4L6.8 9C8.4 9 9.8 9.8 9.8 11.6V14.6Z" fill="#111"/></g>
<g transform="translate(84 376.7)"><rect x="0.7" y="0.7" width="14.8" height="14.6" rx="1" fill="url(#gw)" stroke="#444" stroke-width="1.2"/><rect x="2.6" y="2.4" width="10.2" height="5.6" fill="#fbc368"/><path d="M3.2 6.6L5.6 3L8.2 6.6L10.4 5.2L12.4 4.4M3.4 7.2L6 5.4L8.6 7.2H12" fill="none" stroke="#2a2210" stroke-width="0.6"/><path d="M5 11.5H10.6M8.6 9.4L10.9 11.5L8.6 13.6" fill="none" stroke="#111" stroke-width="1.3"/></g>
<g transform="translate(84 398.7)"><rect x="0.7" y="0.7" width="14.8" height="14.6" rx="1" fill="url(#gw)" stroke="#444" stroke-width="1.2"/><rect x="2.6" y="2.4" width="10.2" height="5.6" fill="#fbc368"/><path d="M3.2 6.6L5.6 3L8.2 6.6L10.4 5.2L12.4 4.4M3.4 7.2L6 5.4L8.6 7.2H12" fill="none" stroke="#2a2210" stroke-width="0.6"/><path d="M5.2 11.5H10.8M8 8.9V14.1" fill="none" stroke="#111" stroke-width="1.3"/></g></svg>
<div class="mi dis" style="top:2px"><b style="left:30.9px;letter-spacing:0.20px">Undo</b><u style="left:175.9px;letter-spacing:-0.38px">Ctrl+Z</u></div>
<div class="mi dis" style="top:24px"><b style="left:30.9px;letter-spacing:0.12px">Redo</b><u style="left:175.9px;letter-spacing:-0.23px">Ctrl+Y</u></div>
<div class="mi" style="top:46px"><b style="left:30.9px;letter-spacing:0.01px">Mesh Parameters</b></div>
<div class="mi" style="top:68px"><b style="left:30.9px;letter-spacing:-0.23px">Quality Criteria</b><u style="left:175.9px;letter-spacing:-0.20px">F11</u></div>
<div class="mi" style="top:90px"><b style="left:30.9px;letter-spacing:0.12px">Delete</b></div>
<div class="mi" style="top:112px"><b style="left:30.9px;letter-spacing:-0.09px">Compress</b></div>
<div class="mi" style="top:134px"><b style="left:30.9px;letter-spacing:0.01px">Renumber</b><em></em></div>
<div class="mi" style="top:156px"><b style="left:30.9px;letter-spacing:0.10px">Isolate</b><em></em></div>
<div class="mi" style="top:178px"><b style="left:30.9px;letter-spacing:0.16px">Snapshot</b></div>
<div class="mi" style="top:200px"><b style="left:30.9px;letter-spacing:0.04px">Cut Plane</b><em></em></div>
<div class="mi" style="top:222px"><b style="left:31.9px;letter-spacing:-0.08px">Transform</b><em></em></div>
<div class="mi" style="top:244px"><b style="left:30.9px;letter-spacing:0.17px">Deck Info</b></div>
<div class="mi hl" style="top:266px"><b style="left:30.9px;letter-spacing:-0.11px">Measure</b></div>
<div class="mi" style="top:288px"><b style="left:31.0px;letter-spacing:0.20px">Annotations</b><em></em></div>
<div class="mi" style="top:310px"><b style="left:30.9px;letter-spacing:-0.01px">Image 3D Utility</b></div>
<div class="mi" style="top:332px"><b style="left:30.9px;letter-spacing:-0.03px">User Storage:Database</b></div>
<div class="mi" style="top:354px"><b style="left:30.9px;letter-spacing:0.06px">File Input Analytics</b></div>
<div class="mi" style="top:376px"><b style="left:30.9px;letter-spacing:-0.05px">File Merge Analytics</b></div>
</div>
</body></html>
